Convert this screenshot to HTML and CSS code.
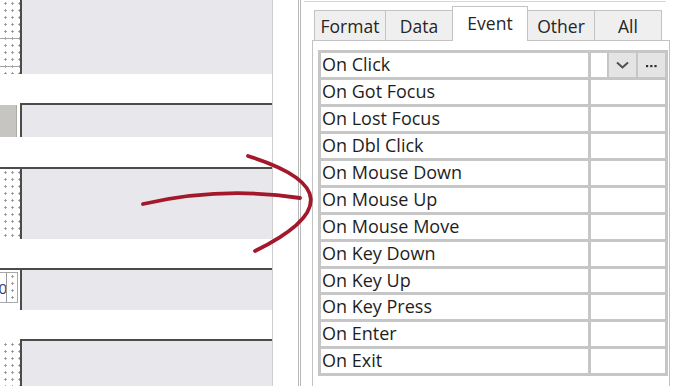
FILE: index.html
```html
<!DOCTYPE html>
<html>
  <head>
    <meta charset="utf-8">
    <title>Property Sheet - Event</title>
    <link rel="stylesheet" href="styles.css">
  </head>
  <body>
    <div class="screen">
      <div class="design">
        <div class="band band-a">
          <div class="strip dots">
            <div class="ctl ctl-1"></div>
            <div class="ctl ctl-2"></div>
          </div>
          <div class="fill"></div>
        </div>
        <div class="space space-29"></div>
        <div class="rule indent"></div>
        <div class="band band-b">
          <div class="strip split">
            <div class="swatch"></div>
            <div class="dots grow"></div>
          </div>
          <div class="fill"></div>
        </div>
        <div class="space space-30"></div>
        <div class="rule"></div>
        <div class="band band-c">
          <div class="strip dots"></div>
          <div class="fill"></div>
        </div>
        <div class="space space-29"></div>
        <div class="rule"></div>
        <div class="band band-d">
          <div class="strip split">
            <div class="textbox"><span>0</span></div>
            <div class="dots boxed"></div>
            <div class="dots grow"></div>
          </div>
          <div class="fill"></div>
        </div>
        <div class="space space-29"></div>
        <div class="rule indent"></div>
        <div class="band band-e">
          <div class="strip dots"></div>
          <div class="fill"></div>
        </div>
      </div>

      <div class="gutter"></div>

      <div class="sheet">
        <div class="combo-edge"></div>
        <div class="tabs">
          <div class="tab tab-format">Format</div>
          <div class="tab tab-data">Data</div>
          <div class="tab tab-event active">Event</div>
          <div class="tab tab-other">Other</div>
          <div class="tab tab-all">All</div>
        </div>
        <div class="panel">
          <div class="props">
            <div class="name">On Click</div>
            <div class="value picker">
              <span class="spacer"></span>
              <span class="btn">
                <svg width="13" height="8" viewBox="0 0 13 8"><polyline points="1,1.5 6.5,6.5 12,1.5" fill="none" stroke="#4f4f4f" stroke-width="2"/></svg>
              </span>
              <span class="btn">
                <svg width="11" height="3" viewBox="0 0 11 3"><rect x="0" y="0" width="2.2" height="2.2" fill="#2e2e2e"/><rect x="4.2" y="0" width="2.2" height="2.2" fill="#2e2e2e"/><rect x="8.4" y="0" width="2.2" height="2.2" fill="#2e2e2e"/></svg>
              </span>
            </div>
            <div class="name">On Got Focus</div><div class="value"></div>
            <div class="name">On Lost Focus</div><div class="value"></div>
            <div class="name">On Dbl Click</div><div class="value"></div>
            <div class="name">On Mouse Down</div><div class="value"></div>
            <div class="name">On Mouse Up</div><div class="value"></div>
            <div class="name">On Mouse Move</div><div class="value"></div>
            <div class="name">On Key Down</div><div class="value"></div>
            <div class="name">On Key Up</div><div class="value"></div>
            <div class="name">On Key Press</div><div class="value"></div>
            <div class="name">On Enter</div><div class="value"></div>
            <div class="name">On Exit</div><div class="value"></div>
          </div>
        </div>
      </div>

      <!-- hand-drawn annotation arrow pointing at On Mouse Up -->
      <svg class="arrow" width="686" height="386" viewBox="0 0 686 386">
        <path d="M143 204 Q 222 186 300 198" fill="none" stroke="#a3192b" stroke-width="3.8" stroke-linecap="round"/>
        <path d="M248 156 Q 370 194 255 251" fill="none" stroke="#a3192b" stroke-width="3.8" stroke-linecap="round"/>
      </svg>
    </div>
  </body>
</html>
```

FILE: styles.css
```css
body {
  margin: 0;
  overflow: hidden;
  background: #fff;
  font-family: "Open Sans", "Noto Sans", sans-serif;
  color: #1e1e1e;
}

.screen {
  position: relative;
  display: flex;
  height: 386px;
  width: 686px;
}

/* ---- form design surface ---- */

.design {
  width: 272px;
  border-right: 1px solid #cdcdcd;
  display: flex;
  flex-direction: column;
  flex-shrink: 0;
}

.band {
  display: flex;
  flex-shrink: 0;
}

.band-a { height: 74px; }
.band-b { height: 32px; }
.band-c { height: 70px; }
.band-d { height: 40px; }
.band-e { flex: 1; }

.strip {
  width: 20px;
  border-right: 2px solid #4b4b4b;
  display: flex;
  flex-direction: column;
}

.strip.split {
  flex-direction: row;
}

.fill {
  flex: 1;
  background: #e8e8ec;
}

.dots {
  background-color: #fff;
  background-image: radial-gradient(circle, #8c8c8c 0.9px, transparent 1.3px);
  background-size: 7px 7px;
  background-position: 2px 0;
}

.grow {
  flex: 1;
}

.ctl {
  border-bottom: 1px solid #a4a4a4;
}

.ctl-1 { height: 38px; }
.ctl-2 { height: 27px; }

.swatch {
  width: 16px;
  background: #c7c5c1;
  border-right: 1px solid #aeaaa6;
}

.textbox {
  width: 6px;
  height: 29px;
  margin-top: 2px;
  border-top: 1px solid #a8a8a8;
  border-bottom: 1px solid #a8a8a8;
  border-right: 1px solid #9a9a9a;
  overflow: hidden;
  display: flex;
  justify-content: flex-end;
  align-items: center;
  color: #2b3d8f;
  font-size: 15px;
}

.textbox span {
  margin-right: -1px;
}

.boxed {
  width: 10px;
  height: 29px;
  margin-top: 2px;
  border-top: 1px solid #a8a8a8;
  border-bottom: 1px solid #a8a8a8;
  border-right: 1px solid #a8a8a8;
}

.space {
  flex-shrink: 0;
}

.space-29 { height: 29px; }
.space-30 { height: 30px; }

.rule {
  height: 2px;
  background: #4b4b4b;
  flex-shrink: 0;
}

.rule.indent {
  margin-left: 20px;
}

.gutter {
  width: 25px;
  flex-shrink: 0;
}

/* ---- property sheet ---- */

.sheet {
  flex: 1;
  border-left: 3px double #b8b8b8;
  padding-left: 11px;
  display: flex;
  flex-direction: column;
}

.combo-edge {
  height: 1px;
  width: 362px;
  margin-left: -8px;
  border-bottom: 1px solid #d6d6d6;
}

.tabs {
  height: 38px;
  display: flex;
  align-items: flex-end;
  padding-left: 2px;
}

.tab {
  box-sizing: border-box;
  height: 30px;
  padding-top: 2px;
  line-height: 26px;
  font-size: 17.5px;
  text-align: center;
  color: #252525;
  background: #efefef;
  border: 1px solid #c3c3c3;
  border-bottom: none;
}

.tab + .tab {
  margin-left: -1px;
}

.tab-format { width: 72px; }
.tab-data { width: 68px; }
.tab-event { width: 76px; }
.tab-other { width: 68px; }
.tab-all { width: 68px; }

.tab.active {
  position: relative;
  z-index: 1;
  height: 35px;
  padding-top: 3px;
  margin-bottom: -1px;
  background: #fff;
}

.panel {
  flex: 1;
  width: 358px;
  box-sizing: border-box;
  border: 1px solid #c3c3c3;
  border-bottom: none;
  padding: 9px 0 0 5px;
}

.props {
  display: grid;
  grid-template-columns: 267px 74px;
  grid-template-rows: repeat(12, 23.94px);
  gap: 3px;
  padding: 3px;
  width: 350px;
  box-sizing: border-box;
  background: #c6c6c6;
}

.name {
  background: #fff;
  font-size: 18px;
  line-height: 23.94px;
  padding-left: 1px;
  white-space: nowrap;
  overflow: hidden;
}

.value {
  background: #fff;
}

.value.picker {
  display: flex;
  gap: 2px;
  background: #c6c6c6;
}

.picker .spacer {
  width: 16px;
  background: #fff;
}

.picker .btn {
  width: 27px;
  background: #e4e4e4;
  display: flex;
  align-items: center;
  justify-content: center;
}

.picker .btn:last-child svg {
  margin-top: 3px;
}

.arrow {
  position: absolute;
  top: 0;
  left: 0;
  pointer-events: none;
}
```
